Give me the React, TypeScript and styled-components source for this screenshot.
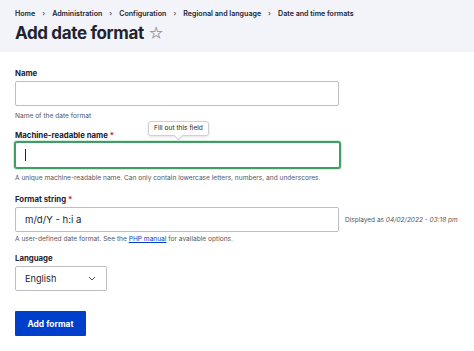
import React from "react";
import styled, { createGlobalStyle } from "styled-components";

const Global = createGlobalStyle`
  html, body { margin: 0; padding: 0; background: #fff; }
  body { font-family: Inter, "Noto Sans", sans-serif; color: #222330; width: 474px; height: 351px; overflow: hidden; }
  * { box-sizing: border-box; }
`;

const Header = styled.header`
  background: #f3f4f9;
  height: 52px;
  padding: 9px 15px 0;
`;

const Crumbs = styled.nav`
  display: flex;
  align-items: center;
  font-size: 7.1px;
  font-weight: 600;
  line-height: 9px;
  color: #222330;
`;

const Sep = styled.span`
  margin: 0 7px;
  color: #55565b;
  font-size: 7px;
`;

const TitleRow = styled.div`
  display: flex;
  align-items: center;
  margin-top: 4px;
`;

const Title = styled.h1`
  margin: 0;
  font-size: 17px;
  line-height: 22px;
  font-weight: 700;
  letter-spacing: -0.35px;
`;

const Star = styled.span`
  margin-left: 4px;
  font-size: 16px;
  color: #9a9ba3;
  line-height: 20px;
  font-weight: 300;
`;

const Form = styled.form`
  padding: 16px 15px 0;
  display: flex;
  flex-direction: column;
`;

const Field = styled.div<{ $mb: number }>`
  display: flex;
  flex-direction: column;
  margin-bottom: ${(p) => p.$mb}px;
  position: relative;
`;

const Label = styled.label`
  font-size: 7.8px;
  font-weight: 700;
  line-height: 10px;
  margin-bottom: 3px;
  display: flex;
`;

const Req = styled.span`
  color: #dc2323;
  margin-left: 2px;
`;

const Row = styled.div`
  display: flex;
  align-items: center;
`;

const Input = styled.div<{ $focus?: boolean; $w: number }>`
  width: ${(p) => p.$w}px;
  height: ${(p) => (p.$focus ? 26 : 25)}px;
  margin-top: ${(p) => (p.$focus ? -1 : 0)}px;
  border: 1px solid ${(p) => (p.$focus ? "#3f9e63" : "#bdbec3")};
  border-radius: 2px;
  background: #fff;
  display: flex;
  align-items: center;
  padding-left: 9px;
  font-size: 9.6px;
  color: #222330;
  box-shadow: ${(p) => (p.$focus ? "0 0 0 1px #3f9e63, 0 0 0 2px #d6ebdd" : "none")};
`;

const Caret = styled.span`
  width: 1px;
  height: 12px;
  background: #222330;
`;

const Desc = styled.div<{ $mt?: number }>`
  font-size: 6.6px;
  line-height: 9px;
  color: #55565b;
  margin-top: ${(p) => p.$mt ?? 5}px;
`;

const Link = styled.a`
  color: #003ecc;
  text-decoration: underline;
`;

const Displayed = styled.div`
  margin-left: 6px;
  font-size: 6.5px;
  color: #55565b;
  white-space: nowrap;
  em { font-style: italic; }
`;

const Tooltip = styled.div`
  position: absolute;
  left: 133px;
  top: -9px;
  height: 15px;
  padding: 0 5px;
  background: #fff;
  border: 1px solid #d0d0d3;
  border-radius: 3px;
  box-shadow: 0 1px 3px rgba(0,0,0,0.12);
  font-size: 6.6px;
  line-height: 13px;
  color: #222;
  z-index: 2;
  &::after {
    content: "";
    position: absolute;
    left: 26px;
    bottom: -4px;
    width: 6px;
    height: 6px;
    background: #fff;
    border-right: 1px solid #d0d0d3;
    border-bottom: 1px solid #d0d0d3;
    transform: rotate(45deg);
  }
`;

const Select = styled.div`
  width: 92px;
  height: 25px;
  border: 1px solid #bdbec3;
  border-radius: 2px;
  display: flex;
  align-items: center;
  justify-content: space-between;
  padding: 0 10px 0 9px;
  font-size: 9.2px;
`;

const Button = styled.button`
  align-self: flex-start;
  margin-top: 8px;
  width: 71px;
  height: 25px;
  background: #003ecc;
  color: #fff;
  border: none;
  border-radius: 1px;
  font-family: inherit;
  font-size: 8.4px;
  font-weight: 700;
  padding: 0;
`;

export default function App() {
  return (
    <>
      <Global />
      <Header>
        <Crumbs>
          <span>Home</span>
          <Sep>›</Sep>
          <span>Administration</span>
          <Sep>›</Sep>
          <span>Configuration</span>
          <Sep>›</Sep>
          <span>Regional and language</span>
          <Sep>›</Sep>
          <span>Date and time formats</span>
        </Crumbs>
        <TitleRow>
          <Title>Add date format</Title>
          <Star>☆</Star>
        </TitleRow>
      </Header>
      <Form>
        <Field $mb={9}>
          <Label>Name</Label>
          <Input $w={324} />
          <Desc $mt={6}>Name of the date format</Desc>
        </Field>
        <Field $mb={11}>
          <Label>
            Machine-readable name<Req>*</Req>
          </Label>
          <Tooltip>Fill out this field</Tooltip>
          <Input $w={325} $focus>
            <Caret />
          </Input>
          <Desc $mt={6}>
            A unique machine-readable name. Can only contain lowercase letters, numbers, and underscores.
          </Desc>
        </Field>
        <Field $mb={9}>
          <Label>
            Format string<Req>*</Req>
          </Label>
          <Row>
            <Input $w={324}>m/d/Y - h:i a</Input>
            <Displayed>
              Displayed as <em>04/02/2022 - 03:18 pm</em>
            </Displayed>
          </Row>
          <Desc $mt={3}>
            A user-defined date format. See the <Link>PHP manual</Link> for available options.
          </Desc>
        </Field>
        <Field $mb={12}>
          <Label>Language</Label>
          <Select>
            <span>English</span>
            <svg width="8" height="5" viewBox="0 0 8 5">
              <path d="M1 1l3 3 3-3" fill="none" stroke="#55565b" strokeWidth="1" />
            </svg>
          </Select>
        </Field>
        <Button type="button">Add format</Button>
      </Form>
    </>
  );
}
